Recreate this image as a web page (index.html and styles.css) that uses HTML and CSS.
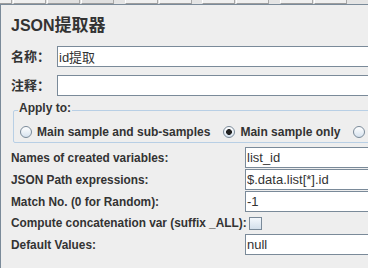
FILE: index.html
```html
<!DOCTYPE html>
<html lang="zh">
<head>
  <meta charset="UTF-8">
  <title>JSON提取器</title>
  <link rel="stylesheet" href="styles.css">
</head>
<body>
  <div class="toolbar">
    <span class="tb-btn first"></span>
    <span class="tb-btn"></span>
    <span class="tb-btn dim"></span>
    <span class="tb-btn dim"></span>
    <span class="tb-sep"></span>
    <span class="tb-btn"></span>
    <span class="tb-btn"></span>
    <span class="tb-sep small"></span>
    <span class="tb-btn"></span>
    <span class="tb-btn"></span>
    <span class="tb-sep"></span>
    <span class="tb-btn"></span>
    <span class="tb-btn"></span>
  </div>

  <div class="panel">
    <h1 class="title">JSON<span class="cjk">提取器</span></h1>

    <div class="field">
      <label for="nom">名称：</label>
      <input type="text" id="nom" value="id提取">
    </div>
    <div class="field">
      <label for="comment">注释：</label>
      <input type="text" id="comment">
    </div>

    <fieldset class="apply">
      <legend>Apply to:</legend>
      <div class="radios">
        <label class="radio"><input type="radio" name="scope">Main sample and sub-samples</label>
        <label class="radio"><input type="radio" name="scope" checked>Main sample only</label>
        <label class="radio"><input type="radio" name="scope" title="Sub-samples only"></label>
      </div>
    </fieldset>

    <div class="grid">
      <label for="names">Names of created variables:</label>
      <input type="text" id="names" value="list_id">

      <label for="paths">JSON Path expressions:</label>
      <input type="text" id="paths" value="$.data.list[*].id">

      <label for="match">Match No. (0 for Random):</label>
      <input type="text" id="match" value="-1">

      <label for="concat">Compute concatenation var (suffix _ALL):</label>
      <div class="check-cell"><input type="checkbox" id="concat" class="check"></div>

      <label for="defaults">Default Values:</label>
      <input type="text" id="defaults" value="null">
    </div>
  </div>
</body>
</html>
```

FILE: styles.css
```css
body {
  margin: 0;
  width: 368px;
  height: 268px;
  overflow: hidden;
  background: #eeeeee;
  font-family: "Liberation Sans", "Noto Sans CJK SC", sans-serif;
  color: #333333;
}

.toolbar {
  display: flex;
  height: 4px;
  background: #e4e4e4;
}
.tb-btn {
  width: 31px;
  margin-right: 1px;
  background: #efefef;
  border-left: 1px solid #ffffff;
  border-right: 1px solid #a8a8a8;
  border-bottom: 1px solid #9c9c9c;
}
.tb-btn.first {
  width: 11px;
  border-left: none;
}
.tb-btn.dim {
  background: #e0e0e0;
}
.tb-sep {
  width: 10px;
}
.tb-sep.small {
  width: 9px;
}

.panel {
  width: 420px;
  height: 300px;
  border-top: 1px solid #7a8a99;
  border-left: 1px solid #7a8a99;
  padding-left: 10px;
}

.title {
  margin: 11px 0 10px;
  height: 20px;
  line-height: 20px;
  font-size: 16px;
  font-weight: bold;
}
.title .cjk {
  font-size: 17px;
}

.field {
  display: flex;
  align-items: center;
  height: 21px;
  margin-bottom: 8px;
}
.field label {
  width: 46px;
  font-size: 13px;
  line-height: 16px;
  font-weight: bold;
}
.field input {
  flex: 1;
}

input[type="text"] {
  box-sizing: border-box;
  height: 21px;
  margin: 0;
  padding: 0 1px;
  border: 1px solid #7a8a99;
  background: #ffffff;
  font-family: "Liberation Sans", "Noto Sans CJK SC", sans-serif;
  font-size: 13px;
  color: #333333;
  outline: none;
}

.apply {
  margin: -3px 0 0 2px;
  padding: 0 0 0 6px;
  border: 1px solid #b8cfe5;
  border-radius: 2px;
}
.apply legend {
  margin-left: -2px;
  padding: 0 1px 5px;
  line-height: 14px;
  font-size: 12px;
  font-weight: bold;
}

.radios {
  display: flex;
  align-items: center;
  height: 20px;
  margin-top: 2px;
  white-space: nowrap;
}
.radio {
  display: flex;
  align-items: center;
  margin-right: 13px;
  font-size: 12px;
  font-weight: bold;
}
.radio input {
  appearance: none;
  box-sizing: border-box;
  width: 12px;
  height: 12px;
  margin: 0 5px 0 0;
  border: 1px solid #7a8a99;
  border-radius: 50%;
  background: linear-gradient(#ffffff, #d6e2ee);
}
.radio input:checked {
  background: radial-gradient(circle, #222222 0, #222222 2.6px, transparent 3.2px), linear-gradient(#ffffff, #d6e2ee);
}

.grid {
  display: grid;
  grid-template-columns: 234px 1fr;
  grid-template-rows: 21px 21px 21px 20px 21px;
  row-gap: 1px;
  margin-top: 4px;
  align-items: center;
}
.grid label {
  font-size: 11.85px;
  font-weight: bold;
  white-space: nowrap;
}
.grid input[type="text"] {
  width: 100%;
}

.check-cell {
  display: flex;
  align-items: center;
  height: 20px;
}
.check {
  appearance: none;
  box-sizing: border-box;
  width: 13px;
  height: 13px;
  margin: 0 0 0 4px;
  border: 1px solid #7a8a99;
  background: linear-gradient(#f4f8fc, #d3dfeb);
}
```
